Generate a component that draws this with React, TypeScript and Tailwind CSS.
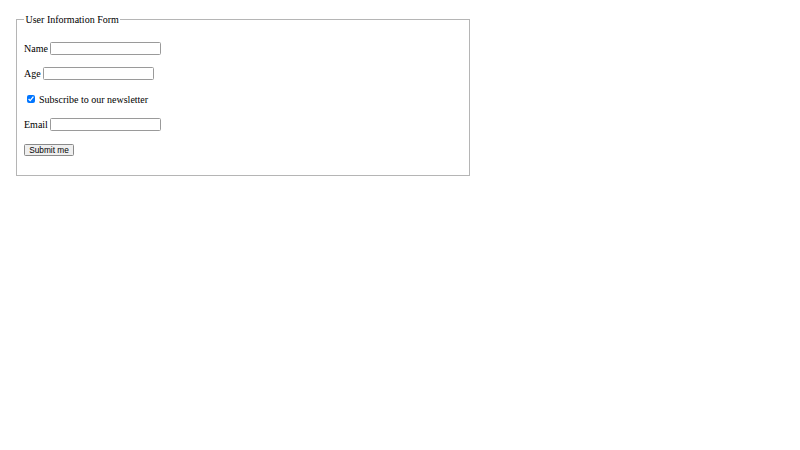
import React from "react";

function TextRow({ label, type = "text" }: { label: string; type?: string }) {
    return (
        <label className="flex h-[13px] items-center gap-[2.5px]">
            <span>{label}</span>
            <input
                type={type}
                className="h-[13px] w-[110.5px] rounded-[1.5px] border border-[#9a9a9a] bg-white"
            />
        </label>
    );
}

export default function App() {
    return (
        <div className="min-h-[450px] w-[800px] bg-white pt-[14px] font-['Liberation_Serif',serif] text-[10px] text-black">
            <form className="ml-[15.5px] w-[454.5px]">
                <fieldset className="border border-[#b5b5b5] pl-[7.5px] pr-[8px] pb-[18.5px]">
                    <legend className="px-[1.5px] leading-[11.5px]">User Information Form</legend>

                    <div className="flex flex-col gap-[12.5px] pt-[16px]">
                        <TextRow label="Name" />
                        <TextRow label="Age" />

                        <label className="flex h-[13px] items-center">
                            <input
                                type="checkbox"
                                defaultChecked
                                className="ml-[2.5px] mr-[4.5px] h-[8px] w-[8px] accent-[#0075ff]"
                            />
                            <span>Subscribe to our newsletter</span>
                        </label>

                        <TextRow label="Email" type="email" />

                        <div className="flex h-[13px] items-center">
                            <button
                                type="button"
                                className="h-[12px] w-[50px] rounded-[1.5px] border border-[#8a8a8a] bg-[#efefef] font-['Liberation_Sans',sans-serif] text-[8.3px] leading-none"
                            >
                                Submit me
                            </button>
                        </div>
                    </div>
                </fieldset>
            </form>
        </div>
    );
}
